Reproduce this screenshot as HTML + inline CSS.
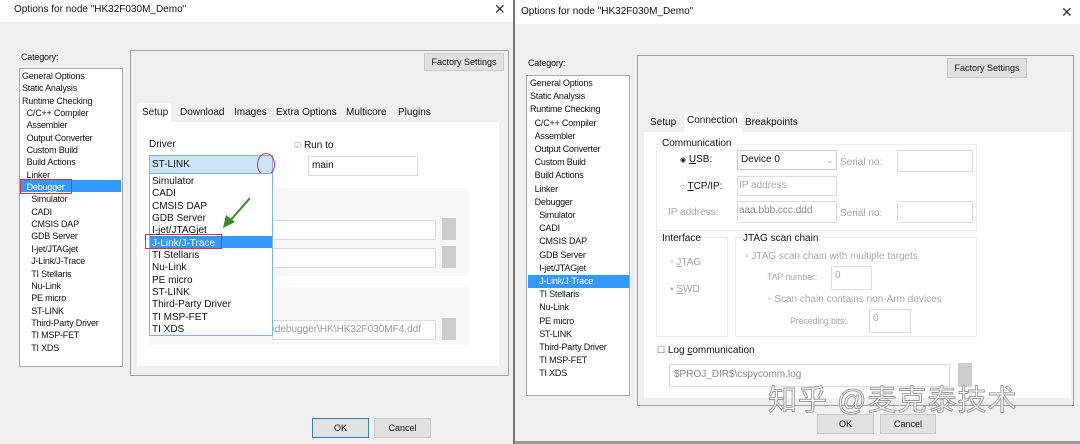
<!DOCTYPE html>
<html><head><meta charset="utf-8"><style>
*{margin:0;padding:0;box-sizing:border-box}
body{width:1080px;height:444px;overflow:hidden;background:#f0f0f0;font-family:"Liberation Sans",sans-serif;color:#111;position:relative}
div,span{position:absolute}
.t{font-size:9px;white-space:nowrap;letter-spacing:-0.2px}
.t10{font-size:10px;white-space:nowrap}
.btn{background:#e1e1e1;border:1px solid #c8c8c8;font-size:9px;text-align:center}
.box{background:#fff;border:1px solid #a8a8a8}
.fld{background:#fff;border:1px solid #dcdcdc}
.g{color:#a8a8a8}
</style></head><body>
<!-- LEFT DIALOG -->
<div style="left:0;top:0;width:514px;height:22px;background:#fff"></div>
<span class="t10" style="left:14px;top:4px">Options for node "HK32F030M_Demo"</span>
<span style="left:494px;top:1px;font-size:14px;color:#333">✕</span>
<span class="t" style="left:21px;top:52px">Category:</span>
<div class="box" style="left:19px;top:68px;width:104px;height:299px"></div>
<div style="left:20px;top:180px;width:101px;height:12px;background:#3399ff"></div>
<div style="left:20px;top:179px;width:52px;height:15px;border:1.5px solid #d9304a"></div>
<div class="t" style="left:22px;top:70px;line-height:12.35px">General Options<br>Static Analysis<br>Runtime Checking<br>&nbsp;&nbsp;C/C++ Compiler<br>&nbsp;&nbsp;Assembler<br>&nbsp;&nbsp;Output Converter<br>&nbsp;&nbsp;Custom Build<br>&nbsp;&nbsp;Build Actions<br>&nbsp;&nbsp;Linker<br><span style="position:static;color:#fff">&nbsp;&nbsp;Debugger</span><br>&nbsp;&nbsp;&nbsp;&nbsp;Simulator<br>&nbsp;&nbsp;&nbsp;&nbsp;CADI<br>&nbsp;&nbsp;&nbsp;&nbsp;CMSIS DAP<br>&nbsp;&nbsp;&nbsp;&nbsp;GDB Server<br>&nbsp;&nbsp;&nbsp;&nbsp;I-jet/JTAGjet<br>&nbsp;&nbsp;&nbsp;&nbsp;J-Link/J-Trace<br>&nbsp;&nbsp;&nbsp;&nbsp;TI Stellaris<br>&nbsp;&nbsp;&nbsp;&nbsp;Nu-Link<br>&nbsp;&nbsp;&nbsp;&nbsp;PE micro<br>&nbsp;&nbsp;&nbsp;&nbsp;ST-LINK<br>&nbsp;&nbsp;&nbsp;&nbsp;Third-Party Driver<br>&nbsp;&nbsp;&nbsp;&nbsp;TI MSP-FET<br>&nbsp;&nbsp;&nbsp;&nbsp;TI XDS</div>
<div style="left:130px;top:50px;width:379px;height:326px;border:1px solid #a0a0a0;background:#f0f0f0"></div>
<div class="btn" style="left:424px;top:53px;width:80px;height:18px;line-height:16px">Factory Settings</div>
<div style="left:137px;top:103px;width:34px;height:20px;background:#fff"></div>
<div style="left:137px;top:122px;width:362px;height:244px;background:#fff"></div>
<span class="t10" style="left:142px;top:107px">Setup</span>
<span class="t10" style="left:180px;top:107px">Download</span>
<span class="t10" style="left:234px;top:107px">Images</span>
<span class="t10" style="left:276px;top:107px">Extra Options</span>
<span class="t10" style="left:346px;top:107px">Multicore</span>
<span class="t10" style="left:398px;top:107px">Plugins</span>
<span class="t10" style="left:149px;top:139px">Driver</span>
<span class="t10" style="left:294px;top:140px"><span style="position:static;color:#999;font-size:8px">☑</span> Run to</span>
<div class="fld" style="left:308px;top:156px;width:110px;height:20px"></div>
<span class="t10" style="left:312px;top:160px">main</span>
<div style="left:149px;top:188px;width:320px;height:88px;background:#f7f7f7"></div>
<div style="left:149px;top:287px;width:320px;height:58px;background:#f7f7f7"></div>
<div class="fld" style="left:272px;top:220px;width:164px;height:20px"></div>
<div class="fld" style="left:272px;top:248px;width:164px;height:20px"></div>
<div class="fld" style="left:272px;top:320px;width:164px;height:20px"></div>
<span class="t10 g" style="left:272px;top:324px;color:#999">\debugger\HK\HK32F030MF4.ddf</span>
<div style="left:442px;top:218px;width:14px;height:22px;background:#ccc"></div>
<div style="left:442px;top:246px;width:14px;height:22px;background:#ccc"></div>
<div style="left:442px;top:318px;width:14px;height:22px;background:#ccc"></div>
<div style="left:149px;top:155px;width:124px;height:19px;background:#cce4f7;border:1px solid #7eb4ea"></div>
<span class="t10" style="left:152px;top:159px">ST-LINK</span>
<div style="left:257px;top:153px;width:18px;height:23px;border:1.5px solid #d9304a;border-radius:50%"></div>
<div style="left:149px;top:173px;width:124px;height:163px;background:#fff;border:1px solid #7eb4ea"></div>
<div style="left:150px;top:236px;width:122px;height:12px;background:#3399ff"></div>
<div style="left:145px;top:234px;width:77px;height:15px;border:1.5px solid #d9304a"></div>
<div class="t10" style="left:152px;top:176px;line-height:12.35px">Simulator<br>CADI<br>CMSIS DAP<br>GDB Server<br>I-jet/JTAGjet<br><span style="position:static;color:#fff">J-Link/J-Trace</span><br>TI Stellaris<br>Nu-Link<br>PE micro<br>ST-LINK<br>Third-Party Driver<br>TI MSP-FET<br>TI XDS</div>
<svg style="position:absolute;left:220px;top:195px" width="34" height="36"><line x1="30" y1="3" x2="9" y2="27" stroke="#3a8a2a" stroke-width="2"/><polygon points="3,33 6,20 15,27" fill="#3a8a2a"/></svg>
<div class="btn" style="left:312px;top:418px;width:57px;height:20px;line-height:18px;border-color:#3c7fb1">OK</div>
<div class="btn" style="left:374px;top:418px;width:57px;height:20px;line-height:18px">Cancel</div>
<div style="left:513px;top:0;width:2px;height:444px;background:#777"></div>

<!-- RIGHT DIALOG -->
<div style="left:515px;top:0;width:565px;height:24px;background:#fff"></div>
<span class="t10" style="left:521px;top:6px">Options for node "HK32F030M_Demo"</span>
<span style="left:1061px;top:4px;font-size:14px;color:#333">✕</span>
<span class="t" style="left:528px;top:58px">Category:</span>
<div class="box" style="left:526px;top:75px;width:104px;height:321px"></div>
<div style="left:528px;top:275px;width:101px;height:13px;background:#3399ff"></div>
<div class="t" style="left:530px;top:77px;line-height:13.2px">General Options<br>Static Analysis<br>Runtime Checking<br>&nbsp;&nbsp;C/C++ Compiler<br>&nbsp;&nbsp;Assembler<br>&nbsp;&nbsp;Output Converter<br>&nbsp;&nbsp;Custom Build<br>&nbsp;&nbsp;Build Actions<br>&nbsp;&nbsp;Linker<br>&nbsp;&nbsp;Debugger<br>&nbsp;&nbsp;&nbsp;&nbsp;Simulator<br>&nbsp;&nbsp;&nbsp;&nbsp;CADI<br>&nbsp;&nbsp;&nbsp;&nbsp;CMSIS DAP<br>&nbsp;&nbsp;&nbsp;&nbsp;GDB Server<br>&nbsp;&nbsp;&nbsp;&nbsp;I-jet/JTAGjet<br><span style="position:static;color:#fff">&nbsp;&nbsp;&nbsp;&nbsp;J-Link/J-Trace</span><br>&nbsp;&nbsp;&nbsp;&nbsp;TI Stellaris<br>&nbsp;&nbsp;&nbsp;&nbsp;Nu-Link<br>&nbsp;&nbsp;&nbsp;&nbsp;PE micro<br>&nbsp;&nbsp;&nbsp;&nbsp;ST-LINK<br>&nbsp;&nbsp;&nbsp;&nbsp;Third-Party Driver<br>&nbsp;&nbsp;&nbsp;&nbsp;TI MSP-FET<br>&nbsp;&nbsp;&nbsp;&nbsp;TI XDS</div>
<div style="left:637px;top:55px;width:437px;height:351px;border:1px solid #a0a0a0;background:#f0f0f0"></div>
<div class="btn" style="left:947px;top:58px;width:80px;height:20px;line-height:18px">Factory Settings</div>
<div style="left:684px;top:112px;width:58px;height:21px;background:#fff"></div>
<div style="left:644px;top:132px;width:427px;height:266px;background:#fff"></div>
<span class="t10" style="left:650px;top:117px">Setup</span>
<span class="t10" style="left:687px;top:115px">Connection</span>
<span class="t10" style="left:745px;top:117px">Breakpoints</span>
<div style="left:656px;top:144px;width:321px;height:87px;border:1px solid #ececec"></div>
<div style="left:656px;top:237px;width:72px;height:100px;border:1px solid #ececec"></div>
<div style="left:735px;top:237px;width:242px;height:100px;border:1px solid #ececec"></div>
<span class="t10" style="left:662px;top:138px;background:#fff">Communication</span>
<span class="t10" style="left:680px;top:154px"><span style="position:static;font-size:7px">◉</span> <u>U</u>SB:</span>
<div class="fld" style="left:737px;top:150px;width:100px;height:20px;border-color:#ccc"></div>
<span class="t10" style="left:741px;top:154px">Device 0</span>
<span class="t g" style="left:826px;top:155px">⌄</span>
<span class="t10 g" style="left:840px;top:157px">Serial no:</span>
<div class="fld" style="left:897px;top:150px;width:76px;height:22px"></div>
<span class="t10" style="left:680px;top:181px"><span style="position:static;font-size:8px;color:#888">○</span> <u>T</u>CP/IP:</span>
<div class="fld" style="left:737px;top:176px;width:100px;height:20px"></div>
<span class="t10 g" style="left:739px;top:180px">IP address</span>
<span class="t10 g" style="left:668px;top:207px">IP address:</span>
<div class="fld" style="left:737px;top:201px;width:100px;height:22px"></div>
<span class="t10 g" style="left:739px;top:205px;color:#888">aaa.bbb.ccc.ddd</span>
<span class="t10 g" style="left:840px;top:208px">Serial no:</span>
<div class="fld" style="left:897px;top:201px;width:76px;height:22px"></div>
<span class="t10" style="left:662px;top:233px;background:#fff">Interface</span>
<span class="t10" style="left:743px;top:233px;background:#fff">JTAG scan chain</span>
<span class="t10 g" style="left:670px;top:257px">▫ <u>J</u>TAG</span>
<span class="t10 g" style="left:670px;top:284px">▪ <u>S</u>WD</span>
<span class="t10 g" style="left:745px;top:251px">▫ JTAG scan chain with multiple targets</span>
<span class="t g" style="left:767px;top:272px">TAP number:</span>
<div class="fld" style="left:831px;top:266px;width:41px;height:24px"></div>
<span class="t10 g" style="left:835px;top:270px">0</span>
<span class="t10 g" style="left:768px;top:294px">▫ Scan chain contains non-Arm devices</span>
<span class="t g" style="left:790px;top:316px">Preceding bits:</span>
<div class="fld" style="left:869px;top:309px;width:42px;height:24px"></div>
<span class="t10 g" style="left:873px;top:313px">0</span>
<span class="t10" style="left:657px;top:345px"><span style="position:static;font-size:9px;color:#666">☐</span> Log <u>c</u>ommunication</span>
<div class="fld" style="left:669px;top:364px;width:281px;height:23px"></div>
<span class="t10 g" style="left:674px;top:369px;color:#888">$PROJ_DIR$\cspycomm.log</span>
<div style="left:958px;top:363px;width:14px;height:24px;background:#ccc"></div>
<div class="btn" style="left:817px;top:414px;width:57px;height:20px;line-height:18px">OK</div>
<div class="btn" style="left:880px;top:414px;width:56px;height:20px;line-height:18px">Cancel</div>
<span style="left:768px;top:377px;font-size:29px;letter-spacing:1px;color:#fff;font-family:'Liberation Sans','Noto Sans CJK SC',sans-serif;-webkit-text-stroke:0.9px #999;white-space:nowrap">知乎 @麦克泰技术</span>
<div style="left:515px;top:441px;width:565px;height:3px;background:#999"></div>
</body></html>
